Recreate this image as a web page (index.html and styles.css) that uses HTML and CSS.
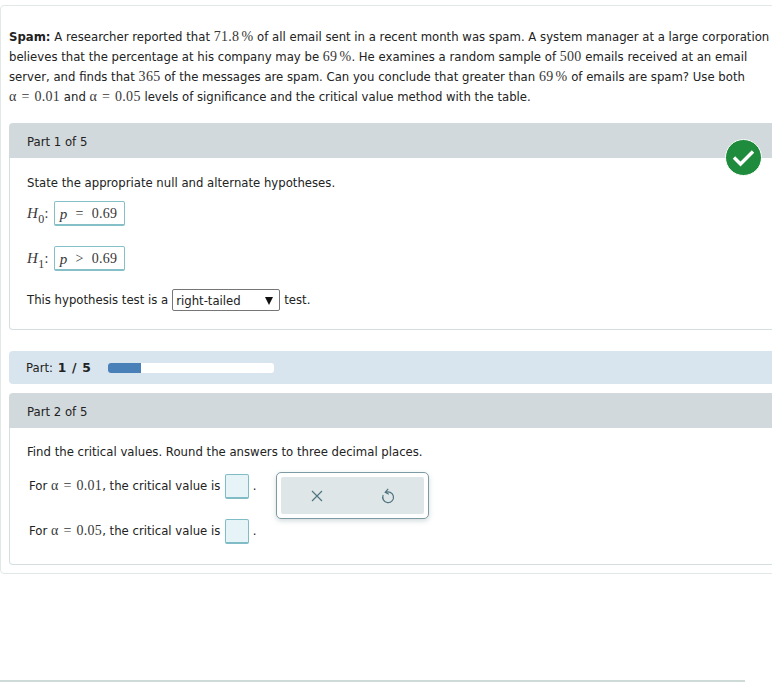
FILE: index.html
```html
<!DOCTYPE html>
<html>
<head>
	<meta charset="UTF-8">
	<meta name="viewport" content="width=device-width, initial-scale=1">
	<title>Spam</title>
	<link rel="stylesheet" href="styles.css">
</head>
<body>

<div class="question">
	<p class="intro">
		<b>Spam:</b> A researcher reported that <span class="num">71.8<span class="pct">%</span></span> of all email sent in a recent month was spam. A system manager at a large corporation<br>
		believes that the percentage at his company may be <span class="num">69<span class="pct">%</span></span>. He examines a random sample of <span class="num">500</span> emails received at an email<br>
		server, and finds that <span class="num">365</span> of the messages are spam. Can you conclude that greater than <span class="num">69<span class="pct">%</span></span> of emails are spam? Use both<br>
		<span class="num expr">α = 0.01</span> and <span class="num expr">α = 0.05</span> levels of significance and the critical value method with the table.
	</p>

	<!-- part 1 -->
	<div class="part part-one">
		<div class="part-head">Part 1 of 5</div>
		<div class="part-body">
			<p class="line">State the appropriate null and alternate hypotheses.</p>
			<div class="hypo">
				<span class="num"><i class="var">H</i><sub>0</sub>:</span>
				<span class="answer num"><i class="var">p</i><span>=</span><span>0.69</span></span>
			</div>
			<div class="hypo">
				<span class="num"><i class="var">H</i><sub>1</sub>:</span>
				<span class="answer num"><i class="var">p</i><span>&gt;</span><span>0.69</span></span>
			</div>
			<div class="tail-row">
				This hypothesis test is a
				<span class="select">right-tailed <span class="arrow"></span></span>
				test.
			</div>
		</div>
		<div class="check">
			<svg width="37" height="37" viewBox="0 0 37 37">
				<circle cx="18.5" cy="18.5" r="18" fill="#1f8b3c" stroke="#fff" stroke-width="1"/>
				<path d="M9 18.5l6.5 6.5L28 12.5" fill="none" stroke="#fff" stroke-width="3.4"/>
			</svg>
		</div>
	</div>

	<div class="progress">
		<span class="progress-label">Part: <b>1 / 5</b></span>
		<div class="bar"><div class="bar-fill" style="width: 20%"></div></div>
	</div>

	<!-- part 2 -->
	<div class="part part-two">
		<div class="part-head">Part 2 of 5</div>
		<div class="part-body">
			<p class="line">Find the critical values. Round the answers to three decimal places.</p>
			<div class="crit-row">
				<div class="crit-lines">
					<div class="crit">For <span class="num expr">α = 0.01</span>, the critical value is <span class="blank"></span> .</div>
					<div class="crit">For <span class="num expr">α = 0.05</span>, the critical value is <span class="blank"></span> .</div>
				</div>
				<div class="toolbox">
					<div class="toolbox-inner">
						<svg width="14" height="14" viewBox="0 0 14 14"><path d="M2 2l10 10M12 2L2 12" fill="none" stroke="#4f7480" stroke-width="1.2"/></svg>
						<svg width="14" height="16" viewBox="0 0 14 16"><path d="M4.4 4.6a5.4 5.4 0 1 1-2.2 2.4M7.2 0.8L4.2 4.4l3.6 1.8" fill="none" stroke="#4f7480" stroke-width="1.2"/></svg>
					</div>
				</div>
			</div>
		</div>
	</div>
</div>

<div class="scroll-edge"></div>

</body>
</html>
```

FILE: styles.css
```css
html, body {
	height: 100%;
	margin: 0;
	overflow: hidden;
}

body {
	background-color: #fff;
	color: #222;
	font-family: "DejaVu Sans", sans-serif;
	font-size: 11.7px;
	line-height: 20px;
	position: relative;
}

.question {
	box-sizing: border-box;
	width: 800px;
	height: 569px;
	margin-top: 5px;
	padding: 0 0 0 8px;
	border: 1px solid #e2e8e8;
	border-radius: 4px;
	overflow: hidden;
}

.intro {
	margin: 0;
	padding-top: 21px;
	white-space: nowrap;
}

.num {
	color: #383838;
	font-family: "Liberation Serif", serif;
	font-size: 14px;
	letter-spacing: 0.3px;
}

.expr {
	word-spacing: 1px;
}

.pct {
	margin-left: 2px;
}

.var {
	font-size: 15px;
}

/* parts */
.part {
	position: relative;
	margin-top: 16px;
	width: 788px;
}

.part-head {
	height: 35px;
	line-height: 38px;
	padding-left: 18px;
	background-color: #d1d9dc;
	border-radius: 4px 4px 0 0;
}

.part-body {
	padding: 15px 17px 0;
	border: 1px solid #d5dee0;
	border-top: 0;
	border-radius: 0 0 4px 4px;
}

.part-one .part-body {
	height: 156px;
}

.part-two {
	margin-top: 9px;
}

.part-two .part-body {
	height: 122px;
	padding-top: 14px;
}

.line {
	margin: 0;
}

.hypo {
	display: flex;
	align-items: center;
	gap: 5px;
	height: 26px;
	margin-top: 7px;
}

.hypo + .hypo {
	margin-top: 19px;
}

.hypo sub {
	font-size: 12px;
	line-height: 0;
	vertical-align: -5px;
}

.answer {
	box-sizing: border-box;
	display: flex;
	align-items: center;
	gap: 8px;
	height: 25px;
	width: 71px;
	padding: 2px 5px 0;
	border: 1px solid #85c0c8;
	border-bottom-width: 2px;
	border-radius: 2px;
}

.tail-row {
	display: flex;
	align-items: center;
	gap: 4px;
	margin-top: 18px;
	height: 22px;
}

.select {
	box-sizing: border-box;
	display: flex;
	justify-content: space-between;
	align-items: center;
	width: 108px;
	height: 22px;
	padding: 2px 6px 0 3px;
	border: 1px solid #767676;
	border-radius: 2px;
}

.arrow {
	width: 0;
	height: 0;
	border-left: 4px solid transparent;
	border-right: 4px solid transparent;
	border-top: 8px solid #111;
}

.check {
	position: absolute;
	left: 716px;
	top: 16px;
	width: 37px;
	height: 37px;
}

/* progress strip */
.progress {
	display: flex;
	align-items: center;
	gap: 16px;
	height: 33px;
	width: 788px;
	margin-top: 21px;
	padding-left: 17px;
	box-sizing: border-box;
	background-color: #d9e5ee;
	border-radius: 4px;
}

.progress-label {
	width: 66px;
	white-space: nowrap;
}

.progress-label b {
	margin-left: 1px;
	font-size: 12.3px;
	word-spacing: 1.5px;
}

.bar {
	width: 166px;
	height: 10px;
	background-color: #fff;
	border-radius: 3px;
	overflow: hidden;
}

.bar-fill {
	height: 100%;
	background-color: #4a80b8;
}

/* critical values */
.crit-row {
	display: flex;
	align-items: flex-start;
	gap: 20px;
	margin-top: 10px;
}

.crit-lines {
	padding: 2px 0 0 2px;
	width: 228px;
}

.crit {
	height: 25px;
	line-height: 24px;
	white-space: nowrap;
}

.crit + .crit {
	margin-top: 20px;
}

.blank {
	box-sizing: border-box;
	display: inline-block;
	vertical-align: middle;
	width: 24px;
	height: 25px;
	margin-left: 1px;
	background-color: #e6f4f7;
	border: 1px solid #7fbcc6;
	border-bottom-width: 2px;
	border-radius: 2px;
}

.toolbox {
	box-sizing: border-box;
	width: 153px;
	height: 47px;
	margin-left: -1px;
	padding: 4px;
	border: 1px solid #7d9ba3;
	border-radius: 5px;
	background-color: #fff;
	box-shadow: 0 2px 5px rgba(80, 110, 120, 0.25);
}

.toolbox-inner {
	display: flex;
	justify-content: space-around;
	align-items: center;
	height: 100%;
	background-color: #dfe6e8;
	border-radius: 2px;
}

.scroll-edge {
	position: absolute;
	left: 0;
	bottom: 0;
	width: 745px;
	height: 2px;
	background-color: #cddad8;
}
```
